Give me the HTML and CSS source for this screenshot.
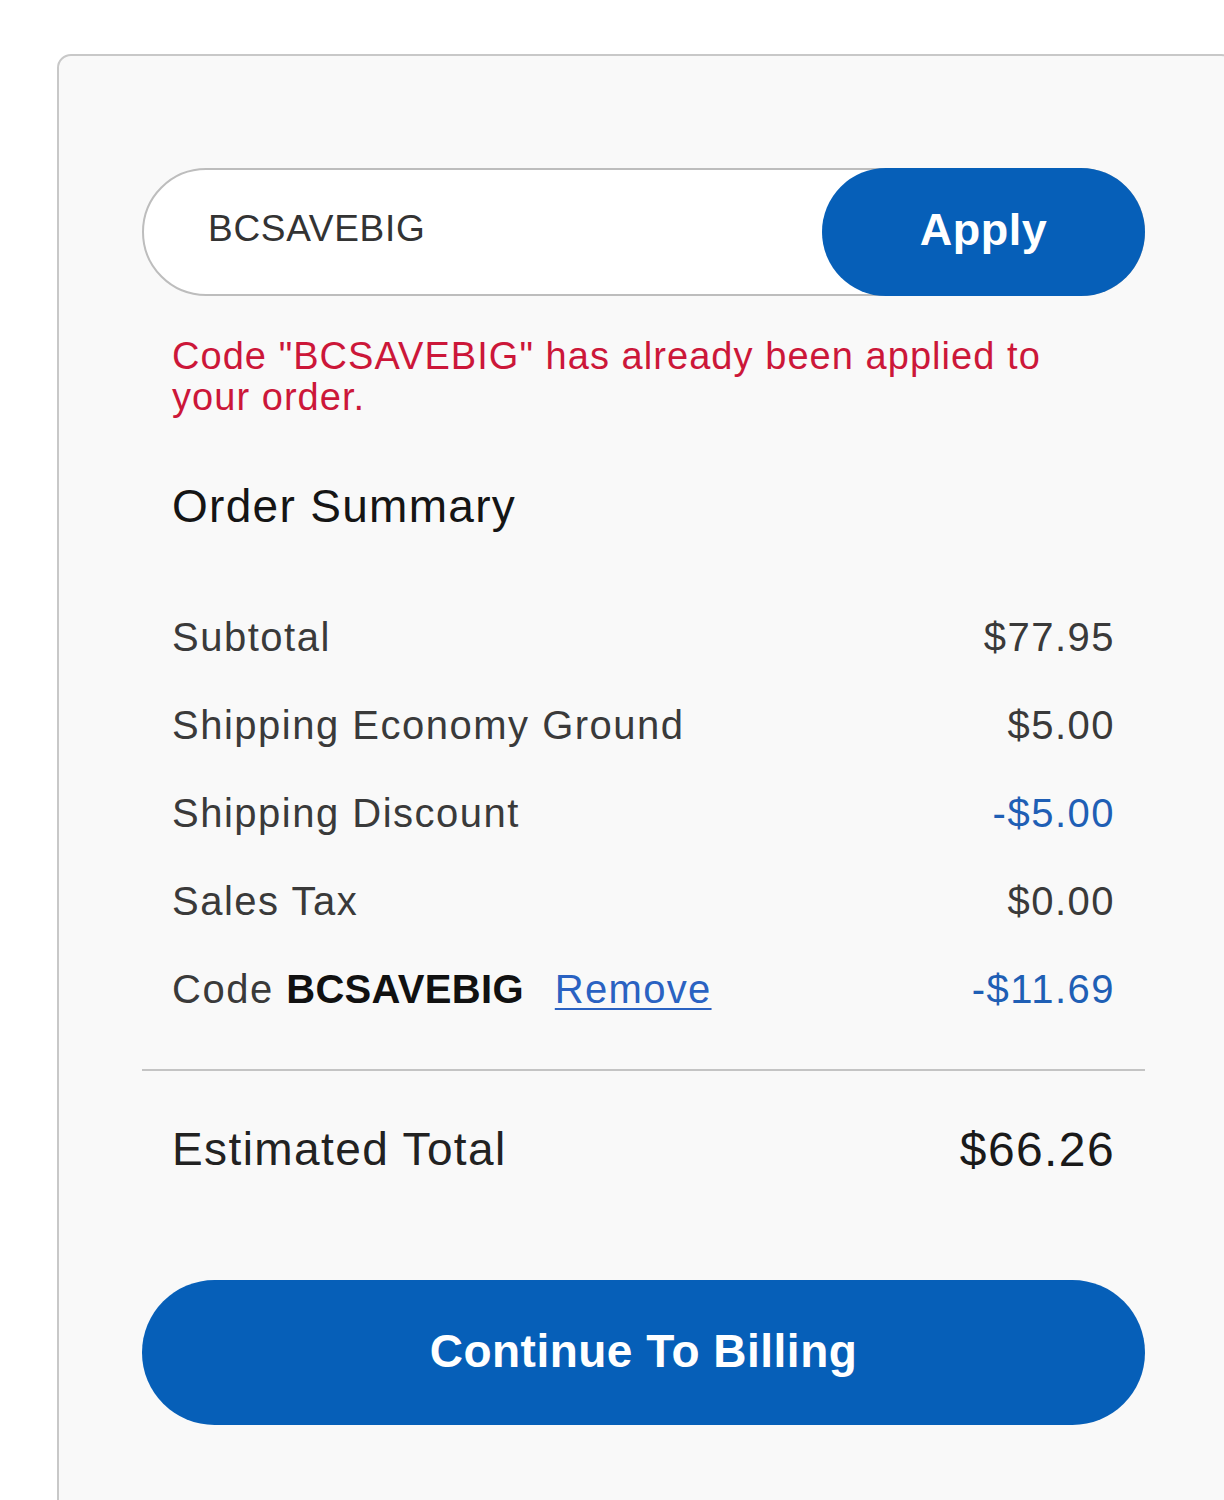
FILE: index.html
```html
<!DOCTYPE html>
<html lang="en">
<head>
<meta charset="utf-8">
<title>Order Summary</title>
<link rel="stylesheet" href="styles.css">
</head>
<body>
<div class="card">
  <form class="promo">
    <input class="promo-input" type="text" value="BCSAVEBIG">
    <button class="promo-apply" type="button">Apply</button>
  </form>
  <p class="promo-error">Code "BCSAVEBIG" has already been applied to your order.</p>

  <h2 class="summary-title">Order Summary</h2>

  <div class="lines">
    <div class="line"><span>Subtotal</span><span>$77.95</span></div>
    <div class="line"><span>Shipping Economy Ground</span><span>$5.00</span></div>
    <div class="line"><span>Shipping Discount</span><span class="discount">-$5.00</span></div>
    <div class="line"><span>Sales Tax</span><span>$0.00</span></div>
    <div class="line"><span class="code-label">Code <b>BCSAVEBIG</b><a class="remove" href="#">Remove</a></span><span class="discount">-$11.69</span></div>
  </div>

  <div class="total"><span>Estimated Total</span><span class="total-amount">$66.26</span></div>

  <button class="continue" type="button">Continue To Billing</button>
</div>
</body>
</html>
```
FILE: styles.css
```css
html, body {
  margin: 0;
  padding: 0;
  background: #ffffff;
}
body {
  font-family: "Liberation Sans", Arial, sans-serif;
  color: #333333;
  overflow: hidden;
}
.card {
  margin: 54px 0 0 57px;
  width: 1178px;
  box-sizing: border-box;
  min-height: 1500px;
  padding: 112px 88px 40px 83px;
  background: #f9f9f9;
  border: 2px solid #c8c8c8;
  border-radius: 14px;
}
.promo {
  display: flex;
  height: 128px;
  margin: 0;
  width: 1003px;
  box-sizing: border-box;
  border: 2px solid #bdbdbd;
  border-radius: 64px;
  background: #ffffff;
}
.promo-input {
  flex: 1;
  border: none;
  background: transparent;
  outline: none;
  font-family: "Liberation Sans", Arial, sans-serif;
  font-size: 37px;
  letter-spacing: 0.7px;
  color: #333333;
  padding: 0 0 6px 64px;
  min-width: 0;
}
.promo-apply {
  width: 323px;
  margin: -2px -2px -2px 0;
  border: none;
  border-radius: 64px;
  background: #065fb8;
  color: #ffffff;
  font-family: "Liberation Sans", Arial, sans-serif;
  font-weight: bold;
  font-size: 45px;
  letter-spacing: 0.5px;
  padding: 0 0 4px 0;
}
.promo-error {
  margin: 40px 0 0 30px;
  color: #cc1739;
  font-size: 38px;
  line-height: 41px;
  letter-spacing: 1.05px;
  max-width: 900px;
}
.summary-title {
  margin: 60px 0 0 30px;
  font-size: 46px;
  line-height: 56px;
  font-weight: normal;
  color: #151515;
  letter-spacing: 1.3px;
}
.lines {
  margin-top: 59px;
  padding: 0 30px 36px 30px;
  border-bottom: 2px solid #c4c4c4;
}
.line {
  display: flex;
  justify-content: space-between;
  align-items: center;
  height: 88px;
  font-size: 40px;
  letter-spacing: 1.5px;
  color: #3a3a3a;
}
.code-label b {
  color: #111111;
  font-weight: bold;
  letter-spacing: 0.3px;
}
.remove {
  margin-left: 31px;
  color: #2a62c2;
  text-decoration: underline;
  text-decoration-thickness: 2px;
  text-underline-offset: 5px;
  letter-spacing: 1.3px;
}
.discount {
  color: #1f5fb5;
}
.total {
  display: flex;
  justify-content: space-between;
  align-items: center;
  height: 88px;
  margin-top: 34px;
  padding: 0 30px 0 30px;
  font-size: 46px;
  letter-spacing: 1.4px;
  color: #222222;
}
.total-amount {
  font-size: 48px;
  letter-spacing: 1.4px;
  color: #1a1a1a;
}
.continue {
  display: block;
  margin-top: 87px;
  width: 1003px;
  height: 145px;
  border: none;
  border-radius: 73px;
  background: #065fb8;
  color: #ffffff;
  font-family: "Liberation Sans", Arial, sans-serif;
  font-weight: bold;
  font-size: 46px;
  letter-spacing: 0.5px;
  padding: 0 0 4px 0;
}
```
